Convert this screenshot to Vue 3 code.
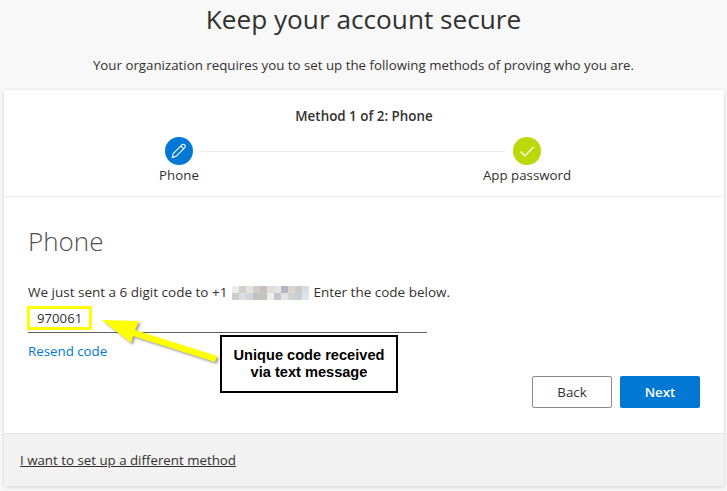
<script setup>
const blurs = [
  '#ececec', '#cfcfcd', '#e8e0da', '#cdcdcb', '#c8bfbb', '#dedede', '#e4e4de', '#b4b4c2', '#dcd6cf', '#cbcbcb', '#d8dde0',
  '#cdcdcd', '#dedede', '#cdd7dc', '#c2c2c0', '#c4c2c0', '#eeeee8', '#c2c5cc', '#e2e2e2', '#d2d2d2', '#c5d0d6', '#e0e5e8'
]
</script>

<template>
  <div class="page">
    <h1 class="title">Keep your account secure</h1>
    <p class="subtitle">Your organization requires you to set up the following methods of proving who you are.</p>
    <main class="card">
      <section class="progress">
        <div class="method">Method 1 of 2: Phone</div>
        <div class="steps">
          <div class="step">
            <span class="dot blue">
              <svg width="18" height="18" viewBox="0 0 18 18" fill="none" stroke="#fff" stroke-width="1.1">
                <path d="M3.2 11.6 11.9 2.9a1.9 1.9 0 0 1 2.9 2.7L6.1 14.3 2.3 15.4Z" />
                <path d="M10.8 4 13.7 6.9" />
              </svg>
            </span>
            <span class="label">Phone</span>
          </div>
          <div class="line"></div>
          <div class="step">
            <span class="dot green">
              <svg width="18" height="18" viewBox="0 0 18 18" fill="none" stroke="#fff" stroke-width="1.2">
                <path d="M2.5 9.5 7 14 15.5 5" />
              </svg>
            </span>
            <span class="label">App password</span>
          </div>
        </div>
      </section>
      <section class="content">
        <h2 class="heading">Phone</h2>
        <p class="sent">
          We just sent a 6 digit code to +1
          <span class="masked"><i v-for="(b, i) in blurs" :key="i" :style="{ background: b }"></i></span>
          Enter the code below.
        </p>
        <div class="field"><span class="code">970061</span></div>
        <a class="resend">Resend code</a>
        <div class="actions">
          <button class="btn back">Back</button>
          <button class="btn next">Next</button>
        </div>
      </section>
      <footer class="foot"><a class="other">I want to set up a different method</a></footer>
    </main>
    <svg class="arrow" width="135" height="65" viewBox="0 0 135 65">
      <polygon class="arrow-shadow" points="7,10 44,11 40,20 122,46 120,52 38,26 36,33" />
      <polygon class="arrow-fill" points="7,10 44,11 40,20 122,46 120,52 38,26 36,33" />
    </svg>
    <div class="callout">Unique code received<br />via text message</div>
  </div>
</template>

<style>
html, body { margin: 0; background: #f8f8f8; }
</style>

<style scoped>
.page {
  position: relative;
  width: 727px;
  height: 491px;
  overflow: hidden;
  background: #f8f8f8;
  color: #323130;
  font-family: "Open Sans", "Noto Sans", sans-serif;
}
.title {
  margin: 0;
  height: 42px;
  text-align: center;
  font-size: 26.2px;
  line-height: 38px;
  font-weight: 400;
}
.subtitle {
  margin: 13px 0 0;
  height: 21px;
  text-align: center;
  font-size: 13.3px;
  line-height: 21px;
}
.card {
  margin: 14px 3px 0 4px;
  height: 396px;
  background: #fff;
  box-shadow: 0 1px 4px rgba(0, 0, 0, .16);
  display: flex;
  flex-direction: column;
}
.progress {
  box-sizing: border-box;
  height: 107px;
  border-bottom: 1px solid #eaeaea;
}
.method {
  padding-top: 16px;
  text-align: center;
  font-size: 13.4px;
  line-height: 20px;
  font-weight: 600;
}
.steps {
  display: flex;
  align-items: flex-start;
  margin: 11px 183px 0 161px;
}
.step {
  display: flex;
  flex-direction: column;
  align-items: center;
  width: 28px;
}
.dot {
  flex: none;
  width: 28px;
  height: 28px;
  border-radius: 50%;
  display: flex;
  align-items: center;
  justify-content: center;
}
.blue { background: #0078d4; }
.green { background: #bad80a; }
.label {
  font-size: 13.3px;
  line-height: 20px;
  white-space: nowrap;
}
.line {
  flex: 1;
  height: 1px;
  margin: 14px 8px 0;
  background: #eaeaea;
}
.content {
  flex: 1;
  display: flex;
  flex-direction: column;
  align-items: flex-start;
  padding: 0 24px;
  position: relative;
}
.heading {
  margin: 25px 0 0;
  font-size: 26px;
  line-height: 38px;
  font-weight: 300;
  color: #505050;
}
.sent {
  margin: 22px 0 0;
  font-size: 13.5px;
  line-height: 20px;
  white-space: nowrap;
  display: flex;
  gap: 4px;
  align-items: center;
}
.masked {
  display: grid;
  grid-template-columns: repeat(11, 7px);
  grid-auto-rows: 7px;
  filter: blur(.7px);
  margin-left: 1px;
  margin-top: 2px;
}
.masked i { display: block; }
.field {
  width: 399px;
  height: 30px;
  border-bottom: 1px solid #605e5c;
  box-sizing: border-box;
  margin-top: 1px;
  padding-top: 3px;
}
.code {
  display: inline-block;
  box-sizing: border-box;
  height: 24px;
  padding: 0 7px;
  margin-left: -1px;
  border: 3px solid #ffff00;
  font-size: 13.2px;
  line-height: 18px;
}
.resend {
  margin-top: 8px;
  font-size: 13.3px;
  line-height: 20px;
  color: #0078d4;
}
.actions {
  margin-top: 15px;
  align-self: flex-end;
  display: flex;
  gap: 8px;
}
.btn {
  width: 80px;
  height: 32px;
  box-sizing: border-box;
  border-radius: 2px;
  font-family: inherit;
  font-size: 13.3px;
  padding: 0;
}
.back { background: #fff; border: 1px solid #8a8886; color: #323130; font-weight: 400; }
.next { background: #0078d4; border: 0; color: #fff; font-weight: 600; }
.foot {
  height: 53px;
  box-sizing: border-box;
  background: #f2f2f2;
  border-top: 1px solid #e6e6e6;
  padding: 14px 0 0 16px;
}
.other {
  font-size: 13.3px;
  line-height: 20px;
  color: #323130;
  text-decoration: underline;
}
.arrow {
  position: absolute;
  left: 95px;
  top: 310px;
}
.arrow-fill { fill: #ffff00; }
.arrow-shadow { fill: rgba(0, 0, 0, .35); transform: translate(2px, 2px); filter: blur(1.2px); }
.callout {
  position: absolute;
  left: 220px;
  top: 335px;
  width: 178px;
  height: 58px;
  box-sizing: border-box;
  border: 2px solid #000;
  background: #fff;
  color: #000;
  padding-top: 10px;
  text-align: center;
  font-family: "Liberation Sans", Arial, sans-serif;
  font-weight: 700;
  font-size: 14.6px;
  line-height: 17px;
}
</style>
